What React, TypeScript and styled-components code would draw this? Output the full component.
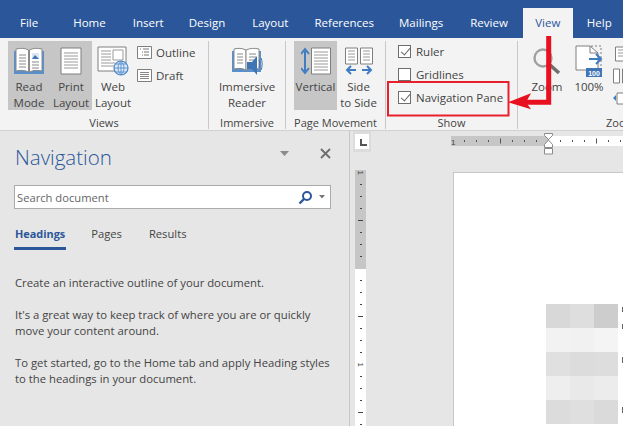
import React from 'react'
import styled, { createGlobalStyle } from 'styled-components'

const GlobalStyle = createGlobalStyle`
  html, body { margin: 0; padding: 0; background: #e6e6e6; }
  * { box-sizing: border-box; }
`

const TABS = [
  { name: 'File', pad: 20 },
  { name: 'Home', pad: 35 },
  { name: 'Insert', pad: 27 },
  { name: 'Design', pad: 25 },
  { name: 'Layout', pad: 27 },
  { name: 'References', pad: 26 },
  { name: 'Mailings', pad: 25 },
  { name: 'Review', pad: 27 },
]

const BLUR = [
  ['#d8d8d8', '#dedede', '#cdcdcd'],
  ['#f2f2f2', '#f1f1f1', '#f4f4f4'],
  ['#e0e0e0', '#dcdcdc', '#dddddd'],
  ['#eeeeee', '#e9e9e9', '#ececec'],
  ['#dcdcdc', '#dfdfdf', '#dadada'],
]

export default function App() {
  return (
    <Screen>
      <GlobalStyle />
      <TabBar>
        {TABS.map((t) => (
          <Tab key={t.name} $left={t.pad}>{t.name}</Tab>
        ))}
        <ActiveTab>View</ActiveTab>
        <Tab $left={14}>Help</Tab>
      </TabBar>

      <Ribbon>
        <Group $width={209}>
          <GroupBody>
            <Pressed>
              <BigButton $width={42}><ReadModeIcon /><span>Read<br />Mode</span></BigButton>
              <BigButton $width={42}><PrintLayoutIcon /><span>Print<br />Layout</span></BigButton>
            </Pressed>
            <BigButton $width={42}><WebLayoutIcon /><span>Web<br />Layout</span></BigButton>
            <SmallColumn>
              <SmallButton><OutlineIcon />Outline</SmallButton>
              <SmallButton><DraftIcon />Draft</SmallButton>
            </SmallColumn>
          </GroupBody>
          <GroupLabel>Views</GroupLabel>
        </Group>

        <Group $width={77}>
          <GroupBody $center>
            <BigButton $width={70}><ImmersiveIcon /><span>Immersive<br />Reader</span></BigButton>
          </GroupBody>
          <GroupLabel>Immersive</GroupLabel>
        </Group>

        <Group $width={100}>
          <GroupBody $inset={8}>
            <Pressed>
              <BigButton $width={43}><VerticalIcon /><span>Vertical</span></BigButton>
            </Pressed>
            <BigButton $width={43}><SideIcon /><span>Side<br />to Side</span></BigButton>
          </GroupBody>
          <GroupLabel>Page Movement</GroupLabel>
        </Group>

        <Group $width={132}>
          <CheckColumn>
            <CheckRow><Check $checked />Ruler</CheckRow>
            <CheckRow><Check />Gridlines</CheckRow>
            <CheckRow><Check $checked />Navigation Pane</CheckRow>
          </CheckColumn>
          <GroupLabel>Show</GroupLabel>
        </Group>

        <ZoomGroup>
          <GroupBody $inset={8}>
            <BigButton $width={42}><ZoomIcon /><span>Zoom</span></BigButton>
            <BigButton $width={42}><PercentIcon /><span>100%</span></BigButton>
            <ZoomExtras />
          </GroupBody>
          <GroupLabel $left={88}>Zoom</GroupLabel>
        </ZoomGroup>
      </Ribbon>

      <Workspace>
        <NavPane>
          <NavHeader>
            <NavTitle>Navigation</NavTitle>
            <PaneControls>
              <svg width="10" height="6" viewBox="0 0 10 6"><path d="M0 0h9L4.500 5z" fill="#8a8a8a" /></svg>
              <svg width="11" height="11" viewBox="0 0 11 11"><path d="M1 1l9 9M10 1l-9 9" stroke="#6e6e6e" strokeWidth="1.800" /></svg>
            </PaneControls>
          </NavHeader>
          <SearchBox>
            <SearchText>Search document</SearchText>
            <svg width="15" height="15" viewBox="0 0 15 15">
              <circle cx="9" cy="6" r="4" fill="none" stroke="#2b579a" strokeWidth="2" />
              <path d="M6 9l-4.500 4.500" stroke="#2b579a" strokeWidth="2.400" />
            </svg>
            <svg width="6" height="4" viewBox="0 0 6 4"><path d="M0 0h6L3 3.500z" fill="#777" /></svg>
          </SearchBox>
          <NavTabs>
            <NavTabActive>Headings</NavTabActive>
            <NavTab $left={25}>Pages</NavTab>
            <NavTab $left={27}>Results</NavTab>
          </NavTabs>
          <NavBody>
            <NavPara>Create an interactive outline of your document.</NavPara>
            <NavPara>It's a great way to keep track of where you are or quickly<br />move your content around.</NavPara>
            <NavPara>To get started, go to the Home tab and apply Heading styles<br />to the headings in your document.</NavPara>
          </NavBody>
        </NavPane>

        <DocArea>
          <RulerColumn>
            <TabCorner><CornerInner /></TabCorner>
            <VerticalRuler />
          </RulerColumn>
          <PageColumn>
            <HorizontalRuler />
            <Page>
              <BlurBlock>
                {BLUR.flat().map((c, i) => (
                  <BlurCell key={i} $color={c} />
                ))}
              </BlurBlock>
              <BlurMarks>
                <svg width="3" height="110" viewBox="0 0 3 110">
                  <path d="M2 3v5M2 20v5M2 53v6M2 103v6" stroke="#666" strokeWidth="2" />
                </svg>
              </BlurMarks>
            </Page>
          </PageColumn>
        </DocArea>
      </Workspace>

      <Callout>
        <svg width="623" height="130" viewBox="0 0 623 130">
          <rect x="388" y="82" width="120.500" height="33.500" fill="none" stroke="#e8202e" strokeWidth="2" />
          <path d="M548.700 36v66.200h-26" fill="none" stroke="#e8101e" strokeWidth="5" />
          <path d="M508 102.200l23-9-5 9 5 7z" fill="#e8101e" />
        </svg>
      </Callout>
    </Screen>
  )
}

function ReadModeIcon() {
  return (
    <svg width="32" height="28" viewBox="0 0 32 28">
      <path d="M1 4h30v23H1z" fill="#5b8fc9" />
      <path d="M3 2c4-1 9-1 12.500 1v22C12 23 7 23 3 24z" fill="#fff" stroke="#8a8a8a" />
      <path d="M29 2c-4-1-9-1-12.500 1v22c3.500-2 8.500-2 12.500-1z" fill="#fff" stroke="#8a8a8a" />
      <path d="M6 8h7M6 11h7M6 14h7M6 17h7M6 20h7M19 15h7M19 18h7M19 21h7" stroke="#8a8a8a" />
      <path d="M19 6h7v6h-7z" fill="#dce6f2" />
      <path d="M19 12l3-4 2 2 2 2z" fill="#3f74b5" />
    </svg>
  )
}

function PrintLayoutIcon() {
  return (
    <svg width="22" height="28" viewBox="0 0 22 28">
      <path d="M1 1h20v26H1z" fill="#fff" stroke="#7f7f7f" />
      <path d="M4 6h14M4 9h14M4 12h14M4 15h14M4 18h14M4 21h14" stroke="#9a9a9a" />
    </svg>
  )
}

function WebLayoutIcon() {
  return (
    <svg width="32" height="30" viewBox="0 0 32 30">
      <path d="M1 1h28v24H1z" fill="#fff" stroke="#7f7f7f" />
      <path d="M4 5h10M4 8h10M4 11h10M4 14h10M4 17h14M4 20h14" stroke="#9a9a9a" />
      <path d="M16 4h10v10H16z" fill="#fff" stroke="#9a9a9a" />
      <circle cx="24" cy="22" r="7" fill="#dbe8f6" stroke="#4a86c8" strokeWidth="1.200" />
      <path d="M17 22h14M24 15v14M19 18h10M19 26h10M24 15c-4 4-4 10 0 14M24 15c4 4 4 10 0 14" fill="none" stroke="#4a86c8" strokeWidth=".8" />
    </svg>
  )
}

function OutlineIcon() {
  return (
    <svg width="15" height="13" viewBox="0 0 15 13">
      <path d="M.5.5h14v12H.5z" fill="#fff" stroke="#7f7f7f" />
      <path d="M3 3h1M6 3h6M5 6h1M7 6h5M5 9h1M7 9h5" stroke="#777" />
    </svg>
  )
}

function DraftIcon() {
  return (
    <svg width="15" height="13" viewBox="0 0 15 13">
      <path d="M.5.5h14v12H.5z" fill="#fff" stroke="#7f7f7f" />
      <path d="M3 3.500h9M3 5.500h9M3 7.500h9M3 9.500h9" stroke="#888" />
    </svg>
  )
}

function ImmersiveIcon() {
  return (
    <svg width="32" height="28" viewBox="0 0 32 28">
      <path d="M1 4h29v21H1z" fill="#5b8fc9" />
      <path d="M3 2c4-1 8-1 12 1v20c-4-2-8-2-12-1z" fill="#fff" stroke="#8a8a8a" />
      <path d="M28 2c-4-1-9-1-13 1v20c4-2 9-2 13-1z" fill="#fff" stroke="#8a8a8a" />
      <path d="M6 7h6M6 10h6M6 13h6M6 16h6M18 7h7M18 10h7M18 13h7" stroke="#8a8a8a" />
      <path d="M16 15h5l5-6v19l-5-6h-5z" fill="#3f74b5" />
      <path d="M28 13c1 2 1 5 0 8M30 11c1.500 3 1.500 9 0 12" fill="none" stroke="#3f74b5" />
    </svg>
  )
}

function VerticalIcon() {
  return (
    <svg width="30" height="28" viewBox="0 0 30 28">
      <path d="M10.500 1h19v26h-19z" fill="#fff" stroke="#7f7f7f" />
      <path d="M13 5h14M13 8h14M13 11h14M13 14h14M13 17h14M13 20h14M13 23h14" stroke="#9a9a9a" />
      <path d="M4 4v20" stroke="#3f7cc0" strokeWidth="2" />
      <path d="M0 7l4-5 4 5M0 21l4 5 4-5" fill="none" stroke="#3f7cc0" strokeWidth="2" />
    </svg>
  )
}

function SideIcon() {
  return (
    <svg width="28" height="28" viewBox="0 0 28 28">
      <path d="M.5 1h12v16H.5zM15.500 1h12v16h-12z" fill="#fff" stroke="#7f7f7f" />
      <path d="M3 4h7M3 7h7M3 10h7M3 13h7M18 4h7M18 7h7M18 10h7M18 13h7" stroke="#9a9a9a" />
      <path d="M2 23h9M17 23h9" stroke="#3f7cc0" strokeWidth="2" />
      <path d="M6 19l-4 4 4 4M22 19l4 4-4 4" fill="none" stroke="#3f7cc0" strokeWidth="2" />
    </svg>
  )
}

function ZoomIcon() {
  return (
    <svg width="30" height="28" viewBox="0 0 30 28">
      <circle cx="11" cy="11" r="8.500" fill="none" stroke="#a0a0a0" strokeWidth="2.400" />
      <path d="M18 18l9 8" stroke="#6f6f6f" strokeWidth="3.600" />
    </svg>
  )
}

function PercentIcon() {
  return (
    <svg width="28" height="32" viewBox="0 0 28 32">
      <path d="M1 1h14l8 7v17H1z" fill="#fff" stroke="#7f7f7f" />
      <path d="M15 1v7h8" fill="none" stroke="#7f7f7f" />
      <path d="M16 1h10v20" fill="none" stroke="#7f7f7f" strokeDasharray="2 2" />
      <path d="M14 14h11M21 9l5 5-5 5" fill="none" stroke="#3f7cc0" strokeWidth="2" />
      <path d="M11 23h16v9H11z" fill="#3f74b5" />
      <text x="19" y="30.500" fontSize="7" fontWeight="700" textAnchor="middle" fill="#fff" fontFamily="Liberation Sans, sans-serif">100</text>
    </svg>
  )
}

function ZoomExtras() {
  return (
    <ExtrasIcon>
      <svg width="20" height="66" viewBox="0 0 20 66">
        <path d="M2.500 3h14v14h-14z" fill="#fff" stroke="#7f7f7f" />
        <path d="M5 6h9M5 9h9M5 12h9" stroke="#9a9a9a" />
        <path d="M.5 25h6v14h-6zM9.500 25h6v14h-6z" fill="#fff" stroke="#7f7f7f" />
        <path d="M4 49h12v11H4z" fill="#fff" stroke="#7f7f7f" />
        <path d="M0 54l3-3v6z" fill="#3f7cc0" />
      </svg>
    </ExtrasIcon>
  )
}

function HorizontalRuler() {
  const ticks = []
  for (let i = 1; i <= 14; i++) {
    const x = 1.5 + i * 12
    const big = i % 4 === 0
    ticks.push(<path key={i} d={big ? `M${x} 2.500v5` : `M${x} 4v2`} stroke="#555" />)
  }
  return (
    <HRuler>
      <svg width="172" height="10" viewBox="0 0 172 10">
        <rect x="0" y="0" width="97" height="10" fill="#c6c6c6" />
        <rect x="97" y="0" width="75" height="10" fill="#fff" />
        <text x="0" y="8.500" fontSize="8" fill="#444" fontFamily="Liberation Sans, sans-serif">1</text>
        {ticks}
      </svg>
      <IndentMarker>
        <svg width="9" height="22" viewBox="0 0 9 22">
          <path d="M.5.500h8v2l-4 4-4-4zM4.500 7l4 4.500v3h-8v-3z" fill="#fff" stroke="#8a8a8a" />
          <path d="M.5 15.500h8v5.500h-8z" fill="#fff" stroke="#8a8a8a" />
        </svg>
      </IndentMarker>
    </HRuler>
  )
}

function VerticalRuler() {
  const ticks = []
  for (let i = 1; i < 22; i++) {
    if (i === 8 || i === 16) continue
    const y = 2.5 + i * 12
    const big = i % 4 === 0
    ticks.push(<path key={i} d={big ? `M3 ${y}h5` : `M5 ${y}h2`} stroke="#444" />)
  }
  return (
    <VRuler>
      <svg width="11" height="256" viewBox="0 0 11 256">
        <rect x="0" y="0" width="11" height="99" fill="#c6c6c6" />
        <rect x="0" y="99" width="11" height="157" fill="#fff" />
        {ticks}
        <text transform="translate(2.500 0.500) rotate(90)" fontSize="8" fill="#444" fontFamily="Liberation Sans, sans-serif">1</text>
        <text transform="translate(2.500 192.500) rotate(90)" fontSize="8" fill="#444" fontFamily="Liberation Sans, sans-serif">1</text>
      </svg>
    </VRuler>
  )
}

const Screen = styled.div`
  position: relative;
  width: 623px;
  height: 426px;
  overflow: hidden;
  display: flex;
  flex-direction: column;
  font-family: 'Open Sans', 'Noto Sans', sans-serif;
  font-size: 11px;
  color: #444;
  background: #e6e6e6;
`

const TabBar = styled.div`
  flex: none;
  height: 38px;
  padding-top: 8px;
  display: flex;
  background: #2b579a;
`

const Tab = styled.div<{ $left: number }>`
  margin-left: ${(p) => p.$left}px;
  line-height: 30px;
  font-size: 11.500px;
  color: #fff;
  white-space: nowrap;
`

const ActiveTab = styled.div`
  width: 50px;
  margin-left: 15px;
  text-align: center;
  line-height: 30px;
  font-size: 11.500px;
  color: #2b579a;
  background: #f3f3f3;
`

const Ribbon = styled.div`
  flex: none;
  height: 93px;
  display: flex;
  background: #f3f3f3;
  border-bottom: 1px solid #d2d2d2;
`

const Group = styled.div<{ $width: number }>`
  flex: none;
  position: relative;
  width: ${(p) => p.$width}px;
  height: 88px;
  margin-top: 3px;
  display: flex;
  flex-direction: column;
  border-right: 1px solid #c8c8c8;
`

const ZoomGroup = styled.div`
  flex: 1;
  margin-top: 3px;
  height: 88px;
  display: flex;
  flex-direction: column;
`

const GroupBody = styled.div<{ $inset?: number; $center?: boolean }>`
  flex: none;
  height: 69px;
  display: flex;
  padding-left: ${(p) => (p.$inset ?? 8)}px;
  justify-content: ${(p) => (p.$center ? 'center' : 'flex-start')};
  ${(p) => (p.$center ? 'padding-left: 0;' : '')}
`

const GroupLabel = styled.div<{ $left?: number }>`
  margin-top: 5px;
  line-height: 16px;
  text-align: ${(p) => (p.$left ? 'left' : 'center')};
  padding-left: ${(p) => p.$left ?? 0}px;
  white-space: nowrap;
  font-size: 11px;
`

const Pressed = styled.div`
  display: flex;
  height: 69px;
  background: #c6c6c6;
`

const BigButton = styled.div<{ $width: number }>`
  flex: none;
  width: ${(p) => p.$width}px;
  display: flex;
  flex-direction: column;
  align-items: center;
  text-align: center;
  line-height: 16px;
  white-space: nowrap;
  font-size: 11.500px;

  svg {
    flex: none;
    height: 32px;
    margin-top: 4px;
    margin-bottom: 2px;
  }
`

const SmallColumn = styled.div`
  margin-left: 3px;
  padding-top: 5px;
  display: flex;
  flex-direction: column;
  gap: 10px;
`

const SmallButton = styled.div`
  height: 13px;
  display: flex;
  align-items: center;
  gap: 4px;
  font-size: 11.500px;
  white-space: nowrap;
`

const CheckColumn = styled.div`
  flex: none;
  height: 69px;
  padding: 4px 0 0 12px;
  display: flex;
  flex-direction: column;
  gap: 10px;
`

const CheckRow = styled.div`
  height: 13px;
  display: flex;
  align-items: center;
  gap: 5px;
  font-size: 11.500px;
  white-space: nowrap;
`

const Check = styled.span<{ $checked?: boolean }>`
  flex: none;
  position: relative;
  width: 13px;
  height: 13px;
  border: 1px solid #6d6d6d;
  background: #fff;

  &::after {
    content: '';
    display: ${(p) => (p.$checked ? 'block' : 'none')};
    position: absolute;
    left: 4px;
    top: 0;
    width: 4px;
    height: 8px;
    border: solid #666;
    border-width: 0 1.500px 1.500px 0;
    transform: rotate(40deg);
  }
`

const ExtrasIcon = styled.div`
  margin-left: 3px;
  padding-top: 3px;
`

const Workspace = styled.div`
  flex: 1;
  min-height: 0;
  display: flex;
`

const NavPane = styled.div`
  flex: none;
  width: 350px;
  padding: 0 18px 0 15px;
  border-right: 1px solid #c6c6c6;
  background: #e6e6e6;
`

const NavHeader = styled.div`
  height: 54px;
  display: flex;
  align-items: flex-start;
  justify-content: space-between;
`

const NavTitle = styled.div`
  margin-top: 12px;
  font-size: 20.500px;
  font-weight: 300;
  line-height: 28px;
  color: #2b579a;
`

const PaneControls = styled.div`
  display: flex;
  align-items: center;
  gap: 30px;
  margin-top: 17px;
`

const SearchBox = styled.div`
  width: 317px;
  height: 24px;
  margin-left: -1px;
  padding: 0 5px 0 2px;
  display: flex;
  align-items: center;
  gap: 6px;
  background: #fff;
  border: 1px solid #ababab;
`

const SearchText = styled.span`
  flex: 1;
  font-size: 11.200px;
  color: #666;
`

const NavTabs = styled.div`
  height: 28px;
  margin-top: 13px;
  display: flex;
`

const NavTabActive = styled.div`
  height: 28px;
  margin-left: -1px;
  padding: 0 1px;
  font-size: 10.900px;
  font-weight: 700;
  line-height: 24px;
  color: #2b579a;
  border-bottom: 3px solid #2b579a;
`

const NavTab = styled.div<{ $left: number }>`
  margin-left: ${(p) => p.$left}px;
  font-size: 11.200px;
  line-height: 24px;
`

const NavBody = styled.div`
  padding-top: 25px;
  display: flex;
  flex-direction: column;
  gap: 16px;
`

const NavPara = styled.p`
  margin: 0;
  font-size: 11.300px;
  line-height: 16px;
  color: #444;
  white-space: nowrap;
`

const DocArea = styled.div`
  flex: 1;
  min-width: 0;
  display: flex;
  background: #e6e6e6;
`

const RulerColumn = styled.div`
  flex: none;
  width: 101px;
  padding-left: 3px;
`

const TabCorner = styled.div`
  width: 18px;
  height: 21px;
  padding: 3px 2px;
  background: #dcdcdc;
`

const CornerInner = styled.div`
  position: relative;
  width: 14px;
  height: 15px;
  background: #fff;

  &::after {
    content: '';
    position: absolute;
    left: 5px;
    top: 5px;
    width: 5px;
    height: 5px;
    border: solid #555;
    border-width: 0 0 2px 2px;
  }
`

const VRuler = styled.div`
  margin: 18px 0 0 2px;
  line-height: 0;
`

const PageColumn = styled.div`
  flex: 1;
  min-width: 0;
`

const HRuler = styled.div`
  position: relative;
  height: 41px;
  padding-top: 5px;
  line-height: 0;
`

const IndentMarker = styled.div`
  position: absolute;
  left: 93px;
  top: 2px;
`

const Page = styled.div`
  position: relative;
  height: 254px;
  margin-left: 2px;
  padding: 131px 0 0 92px;
  background: #fff;
  border: solid #c6c6c6;
  border-width: 1px 0 0 1px;
`

const BlurBlock = styled.div`
  display: grid;
  grid-template-columns: repeat(3, 24px);
  grid-auto-rows: 24px;
`

const BlurCell = styled.div<{ $color: string }>`
  background: ${(p) => p.$color};
`

const BlurMarks = styled.div`
  position: absolute;
  left: 167px;
  top: 131px;
`

const Callout = styled.div`
  position: absolute;
  left: 0;
  top: 0;
  line-height: 0;
  pointer-events: none;
`
